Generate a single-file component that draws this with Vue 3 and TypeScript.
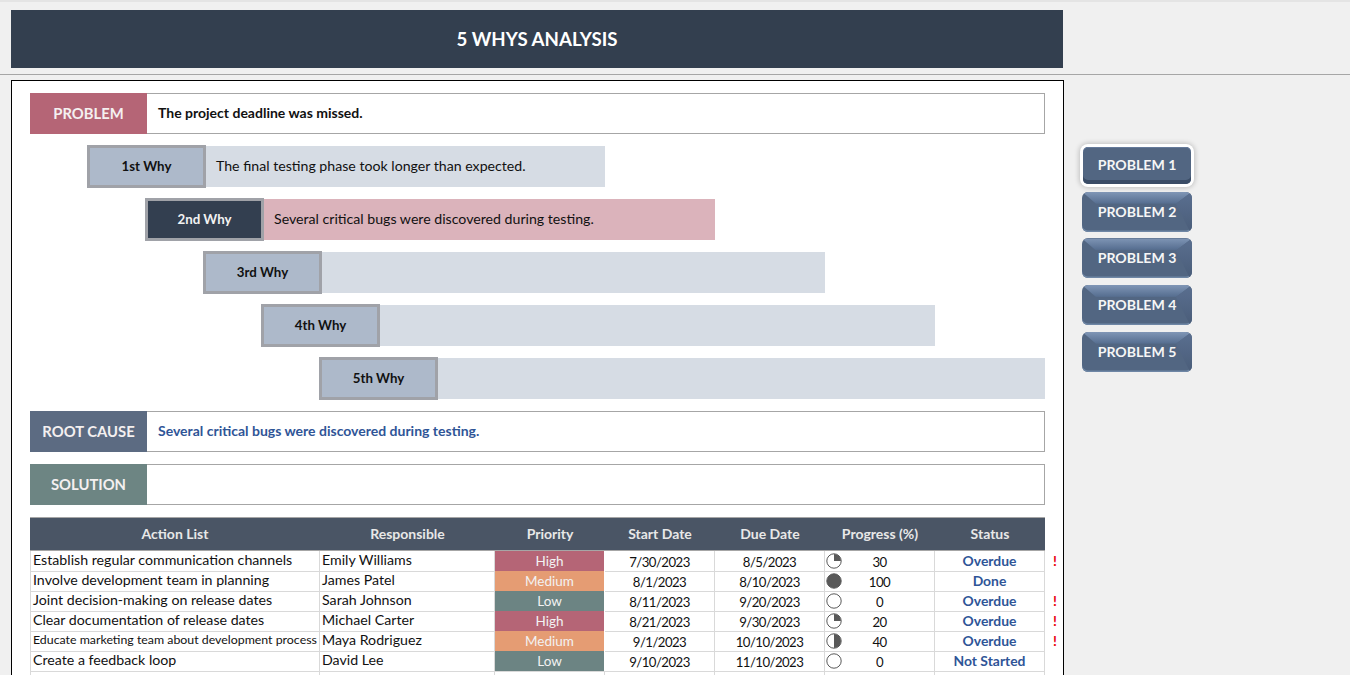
<script setup lang="ts">
interface Why { label: string; text: string; active?: boolean }
interface Row { action: string; small?: boolean; who: string; priority: 'High' | 'Medium' | 'Low'; start: string; due: string; ball: number; progress: number; status: string; alert?: boolean }

const whys: Why[] = [
  { label: '1st Why', text: 'The final testing phase took longer than expected.' },
  { label: '2nd Why', text: 'Several critical bugs were discovered during testing.', active: true },
  { label: '3rd Why', text: '' },
  { label: '4th Why', text: '' },
  { label: '5th Why', text: '' },
]

const rows: Row[] = [
  { action: 'Establish regular communication channels', who: 'Emily Williams', priority: 'High', start: '7/30/2023', due: '8/5/2023', ball: 25, progress: 30, status: 'Overdue', alert: true },
  { action: 'Involve development team in planning', who: 'James Patel', priority: 'Medium', start: '8/1/2023', due: '8/10/2023', ball: 100, progress: 100, status: 'Done' },
  { action: 'Joint decision-making on release dates', who: 'Sarah Johnson', priority: 'Low', start: '8/11/2023', due: '9/20/2023', ball: 0, progress: 0, status: 'Overdue', alert: true },
  { action: 'Clear documentation of release dates', who: 'Michael Carter', priority: 'High', start: '8/21/2023', due: '9/30/2023', ball: 25, progress: 20, status: 'Overdue', alert: true },
  { action: 'Educate marketing team about development process', small: true, who: 'Maya Rodriguez', priority: 'Medium', start: '9/1/2023', due: '10/10/2023', ball: 50, progress: 40, status: 'Overdue', alert: true },
  { action: 'Create a feedback loop', who: 'David Lee', priority: 'Low', start: '9/10/2023', due: '11/10/2023', ball: 0, progress: 0, status: 'Not Started' },
]

const heads = ['Action List', 'Responsible', 'Priority', 'Start Date', 'Due Date', 'Progress (%)', 'Status']
const problems = ['PROBLEM 1', 'PROBLEM 2', 'PROBLEM 3', 'PROBLEM 4', 'PROBLEM 5']

function whyStyle(i: number) {
  return { marginLeft: `${57 + i * 58}px`, width: i === 4 ? 'auto' : `${518 + i * 52}px` }
}
function ballPath(p: number): string {
  if (p === 25) return 'M8 8V1A7 7 0 0 1 15 8Z'
  if (p === 50) return 'M8 1A7 7 0 0 1 8 15Z'
  return ''
}
</script>

<template>
  <div class="page">
    <div class="top">
      <div class="title">5 WHYS ANALYSIS</div>
    </div>
    <div class="main">
      <section class="panel">
        <div class="box">
          <div class="box-label problem">PROBLEM</div>
          <div class="box-text">The project deadline was missed.</div>
        </div>

        <div class="whys">
          <div v-for="(w, i) in whys" :key="w.label" class="why" :class="{ active: w.active }" :style="whyStyle(i)">
            <div class="why-label">{{ w.label }}</div>
            <div class="why-text">{{ w.text }}</div>
          </div>
        </div>

        <div class="box">
          <div class="box-label root">ROOT CAUSE</div>
          <div class="box-text blue">Several critical bugs were discovered during testing.</div>
        </div>
        <div class="box solution-box">
          <div class="box-label solution">SOLUTION</div>
          <div class="box-text"></div>
        </div>

        <div class="table">
          <div class="tr head">
            <div v-for="h in heads" :key="h" class="th">{{ h }}</div>
          </div>
          <div v-for="r in rows" :key="r.action" class="tr body">
            <div class="td left" :class="{ small: r.small }">{{ r.action }}</div>
            <div class="td left">{{ r.who }}</div>
            <div class="td pri" :class="r.priority.toLowerCase()">{{ r.priority }}</div>
            <div class="td date">{{ r.start }}</div>
            <div class="td date">{{ r.due }}</div>
            <div class="td prog">
              <svg class="ball" width="16" height="16" viewBox="0 0 16 16">
                <circle cx="8" cy="8" r="7.2" :fill="r.ball === 100 ? '#595959' : '#fff'" stroke="#595959" stroke-width="1" />
                <path v-if="ballPath(r.ball)" :d="ballPath(r.ball)" fill="#595959" />
              </svg>
              <span class="num">{{ r.progress }}</span>
            </div>
            <div class="td status">
              {{ r.status }}
              <span v-if="r.alert" class="alert">!</span>
            </div>
          </div>
          <div class="tr body">
            <div v-for="h in heads" :key="h" class="td"></div>
          </div>
        </div>
      </section>

      <nav class="nav">
        <button v-for="(p, i) in problems" :key="p" class="btn" :class="{ selected: i === 0 }">
          <span>{{ p }}</span>
        </button>
      </nav>
    </div>
  </div>
</template>

<style>
html, body { margin: 0; background: #f0f0f0; overflow: hidden; }
</style>

<style scoped>
.page {
  width: 1350px;
  height: 675px;
  overflow: hidden;
  background: #f0f0f0;
  font-family: Lato, "Open Sans", sans-serif;
  color: #111;
  box-sizing: border-box;
  border-top: 2px solid #e4e4e4;
}
.top {
  height: 73px;
  box-sizing: border-box;
  padding: 8px 0 0 11px;
  border-bottom: 1px solid #a6a6a6;
}
.title {
  width: 1052px;
  height: 58px;
  background: #333f4f;
  color: #fff;
  font-weight: 700;
  font-size: 18.7px;
  display: flex;
  align-items: center;
  justify-content: center;
}
.main {
  display: flex;
  align-items: flex-start;
  padding: 5px 0 0 11px;
}
.panel {
  width: 1053px;
  height: 640px;
  flex: none;
  box-sizing: border-box;
  border: 1px solid #000;
  background: #fff;
  padding: 12px 18px 0;
}
.box {
  display: flex;
  height: 41px;
  box-sizing: border-box;
  border: 1px solid #a6a6a6;
}
.box-label {
  width: 117px;
  flex: none;
  margin: -1px 0 -1px -1px;
  padding-bottom: 2px;
  box-sizing: border-box;
  color: #f4f0f0;
  font-weight: 700;
  font-size: 14.8px;
  display: flex;
  align-items: center;
  justify-content: center;
  white-space: nowrap;
}
.problem { background: #b56576; }
.root { background: #5c6b82; }
.solution { background: #6d8583; }
.box-text {
  flex: 1;
  padding: 0 0 2px 11px;
  display: flex;
  align-items: center;
  font-weight: 700;
  font-size: 14px;
}
.blue { color: #2f5597; }
.solution-box { margin-top: 12px; }
.whys {
  display: flex;
  flex-direction: column;
  gap: 10px;
  margin: 11px 0 11px;
}
.why {
  display: flex;
  height: 43px;
  align-items: center;
}
.why-label {
  width: 119px;
  height: 43px;
  flex: none;
  box-sizing: border-box;
  border: 3px solid #a0a2a8;
  padding-bottom: 2px;
  background: #adb9ca;
  font-weight: 700;
  font-size: 13.3px;
  display: flex;
  align-items: center;
  justify-content: center;
}
.why-text {
  flex: 1;
  height: 41px;
  box-sizing: border-box;
  background: #d6dce4;
  padding: 0 0 2px 10px;
  display: flex;
  align-items: center;
  font-size: 14.15px;
}
.active .why-label { background: #333f50; color: #f2f2f2; }
.active .why-text { background: #dbb3bb; }
.table {
  margin-top: 12px;
  border-top: 1px solid #a6a6a6;
}
.tr {
  display: grid;
  grid-template-columns: 290px 175px 110px 110px 110px 110px 110px;
}
.head {
  height: 32px;
  background: #4a5565;
  border-bottom: 1px solid #a6a6a6;
}
.th {
  color: #e8e8e8;
  font-weight: 700;
  font-size: 14px;
  padding-bottom: 2px;
  display: flex;
  align-items: center;
  justify-content: center;
}
.body { height: 20px; }
.td {
  position: relative;
  box-sizing: border-box;
  border-right: 1px solid #d9d9d9;
  border-bottom: 1px solid #d9d9d9;
  font-size: 14.2px;
  line-height: 18px;
  text-align: center;
  white-space: nowrap;
}
.td:first-child { border-left: 1px solid #d9d9d9; }
.td.left { text-align: left; padding-left: 2px; }
.td.small { font-size: 12.35px; }
.pri { color: #f2f2f2; font-size: 13.5px; padding-top: 1px; border-right-color: #fff; }
.pri.high { background: #b56576; }
.pri.medium { background: #e59c73; }
.pri.low { background: #6c8483; }
.date, .num {
  font-size: 13.2px;
  letter-spacing: -0.55px;
  padding-top: 2px;
}
.prog {
  display: flex;
  align-items: center;
}
.ball { margin-left: 1px; flex: none; }
.num { position: absolute; left: 0; right: 0; top: 0; text-align: center; }
.status { color: #2f5597; font-weight: 700; font-size: 13.9px; padding-top: 1px; }
.alert {
  position: absolute;
  right: -13px;
  top: 1px;
  color: #e8000f;
  font-weight: 700;
}
.nav {
  display: flex;
  flex-direction: column;
  gap: 6.7px;
  margin: 67px 0 0 18px;
}
.btn {
  position: relative;
  width: 110px;
  height: 40px;
  padding: 0 0 1px;
  box-sizing: border-box;
  border: none;
  border-radius: 6px;
  overflow: hidden;
  background: #526682;
  box-shadow: inset 0 -1.5px 0 #6f87a6;
  color: #f6f6f6;
  font-family: inherit;
  font-weight: 700;
  font-size: 14.1px;
  display: flex;
  align-items: center;
  justify-content: center;
  white-space: nowrap;
}
.btn span { position: relative; }
.btn::before {
  content: "";
  position: absolute;
  inset: 0;
  background: linear-gradient(#8096b6, #587092 11px, #526682 13px);
  clip-path: polygon(0 0, 100% 0, calc(100% - 16px) 12px, 14px 12px);
}
.btn::after {
  content: "";
  position: absolute;
  inset: 0;
  background: linear-gradient(#5a6f90, #4a5d79);
  clip-path: polygon(100% 0, 100% 100%, calc(100% - 3px) calc(100% - 2px), calc(100% - 16px) 12px);
}
.btn.selected {
  height: 37px;
  width: 108px;
  margin: 0 1px 1px;
  padding-bottom: 2px;
  border-radius: 5px;
  background: #526682;
  box-shadow:
    inset 0 1px 0 #64799a,
    inset 0 -4px 0 #3a4c66,
    0 0 0 3px #fff,
    0 0 5px 4px rgba(0, 0, 0, 0.2);
  overflow: visible;
}
.btn.selected::before, .btn.selected::after { display: none; }
</style>
